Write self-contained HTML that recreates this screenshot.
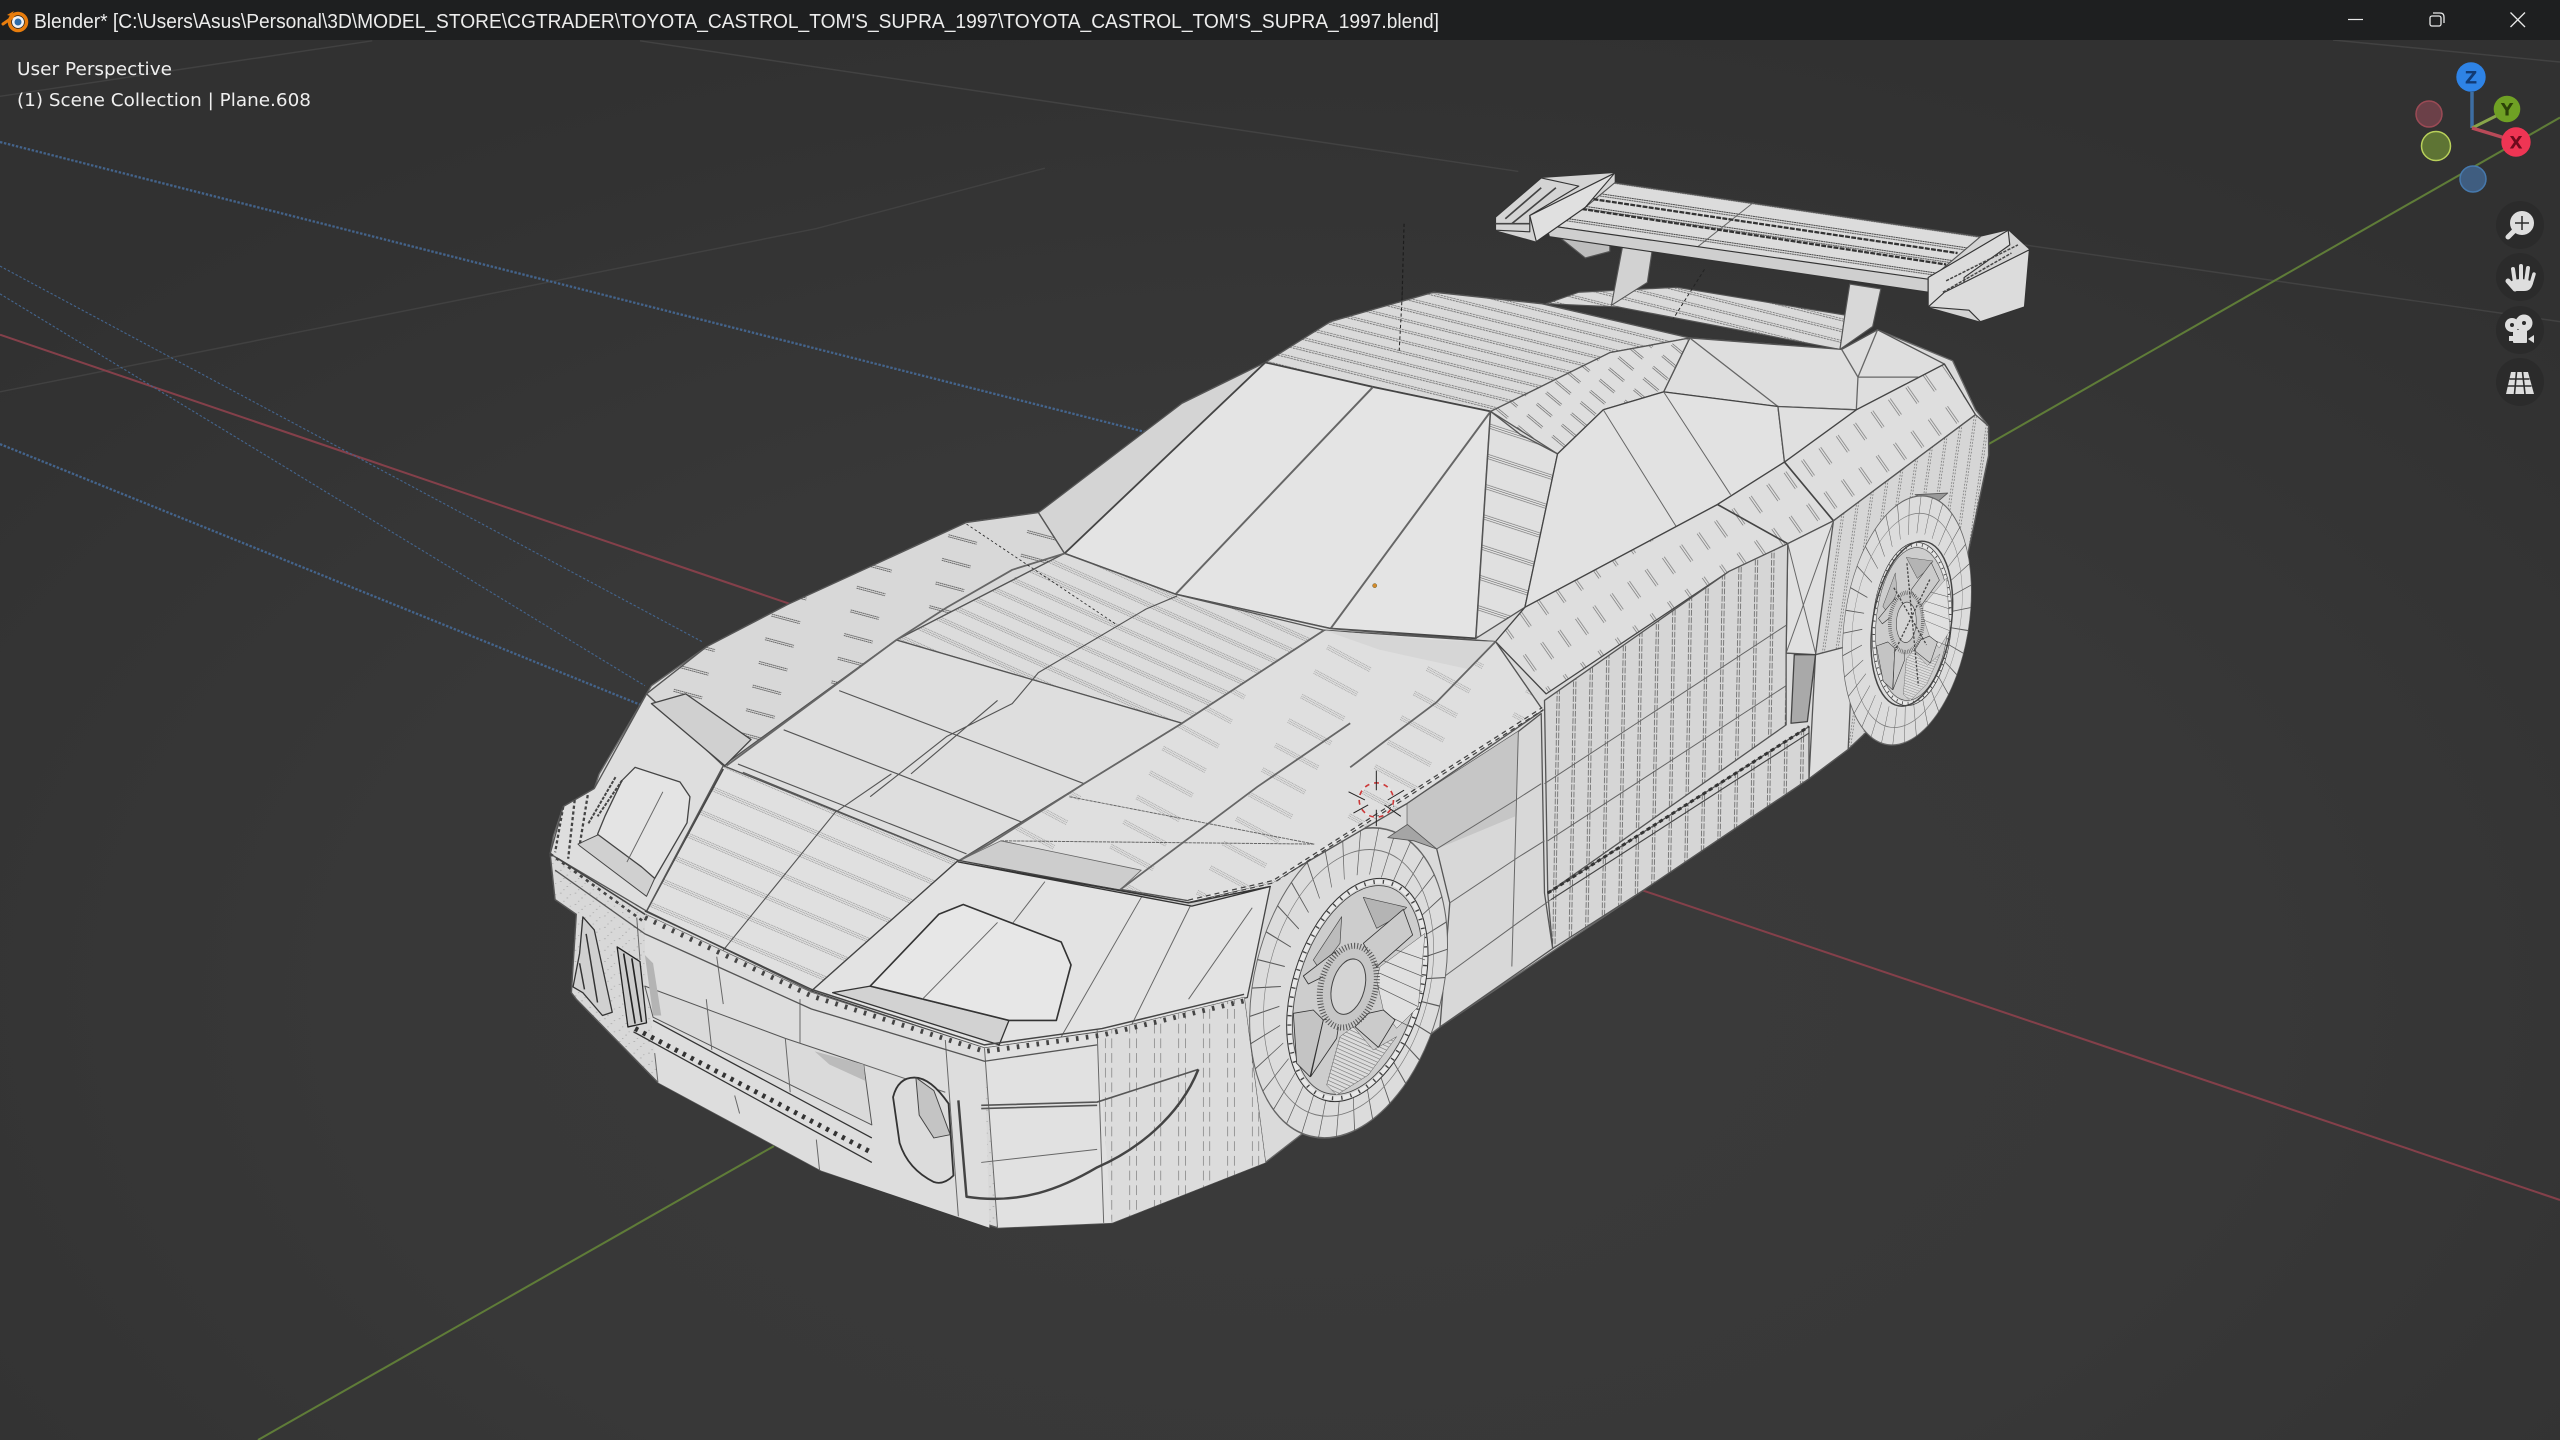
<!DOCTYPE html>
<html lang="en"><head><meta charset="utf-8"><title>Blender</title>
<style>
html,body{margin:0;padding:0;width:2560px;height:1440px;overflow:hidden;background:#363636}
svg{display:block;position:absolute;left:0;top:0}
#bg{position:absolute;left:0;top:0;width:2560px;height:1440px;background:radial-gradient(ellipse 1700px 1000px at 1300px 1000px,#3b3b3b 0%,#383838 55%,#313131 100%)}
</style></head><body><div id="bg"></div>
<svg width="2560" height="1440" viewBox="0 0 2560 1440" xmlns="http://www.w3.org/2000/svg">
<defs>
<pattern id="roof" width="20" height="6.500" patternUnits="userSpaceOnUse" patternTransform="rotate(14)"><rect width="20" height="6.500" fill="#dadada"/><path d="M0 1H20M0 2.200H20" stroke="#444" stroke-width=".42" stroke-dasharray=".8 .2 .5 .5"/></pattern>
<pattern id="hood" width="20" height="10" patternUnits="userSpaceOnUse" patternTransform="rotate(24)"><rect width="20" height="10" fill="#dcdcdc"/><path d="M0 1H20M0 2.200H20M0 3.400H20" stroke="#444" stroke-width=".32" stroke-dasharray=".5 .5"/></pattern>
<pattern id="nose" width="20" height="16" patternUnits="userSpaceOnUse" patternTransform="rotate(23)"><rect width="20" height="16" fill="#e0e0e0"/><path d="M0 1H20M0 2.200H20M0 3.400H20" stroke="#444" stroke-width=".3" stroke-dasharray=".5 .5"/></pattern>
<pattern id="fendL" width="46" height="15" patternUnits="userSpaceOnUse" patternTransform="rotate(15)"><rect width="46" height="15" fill="#d8d8d8"/><path d="M2 1H20M2 2.200H20" stroke="#444" stroke-width=".45" stroke-dasharray="1 .25"/></pattern>
<pattern id="fendR" width="60" height="17" patternUnits="userSpaceOnUse" patternTransform="rotate(28)"><rect width="60" height="17" fill="#dfdfdf"/><path d="M4 1H34M4 2.200H34M4 3.400H34" stroke="#555" stroke-width=".28" stroke-dasharray=".5 .5"/></pattern>
<pattern id="band" width="13" height="24" patternUnits="userSpaceOnUse" patternTransform="rotate(-35)"><rect width="13" height="24" fill="#dedede"/><path d="M1 0V24M2.400 0V24" stroke="#555" stroke-width=".32" stroke-dasharray="12 12"/></pattern>
<pattern id="cpil" width="9" height="20" patternUnits="userSpaceOnUse" patternTransform="rotate(-50)"><rect width="9" height="20" fill="#dedede"/><path d="M1 0V20M2.200 0V20" stroke="#555" stroke-width=".35" stroke-dasharray="12 8"/></pattern>
<pattern id="strip" width="30" height="18" patternUnits="userSpaceOnUse" patternTransform="rotate(18)"><rect width="30" height="18" fill="#e0e0e0"/><path d="M0 1H30M0 2.300H30M0 3.600H30" stroke="#555" stroke-width=".32"/></pattern>
<pattern id="vert" width="10" height="9" patternUnits="userSpaceOnUse" patternTransform="rotate(1)"><rect width="10" height="9" fill="#d6d6d6"/><path d="M1 0V9M2.400 0V9" stroke="#444" stroke-width=".38" stroke-dasharray="3.500 1"/></pattern>
<pattern id="vert2" width="15" height="9" patternUnits="userSpaceOnUse"><rect width="15" height="9" fill="#dcdcdc"/><path d="M2 0V9M6 0V9" stroke="#666" stroke-width=".35" stroke-dasharray="3 3"/></pattern>
<pattern id="rear" width="8" height="8" patternUnits="userSpaceOnUse" patternTransform="rotate(8)"><rect width="8" height="8" fill="#d6d6d6"/><path d="M1 0V8M2.200 0V8" stroke="#555" stroke-width=".35" stroke-dasharray="1 1"/></pattern>
<pattern id="wing" width="30" height="9" patternUnits="userSpaceOnUse" patternTransform="rotate(8.4)"><rect width="30" height="9" fill="#dcdcdc"/><path d="M0 1.200H30M0 2.600H30" stroke="#444" stroke-width=".55" stroke-dasharray="1.200 .3"/></pattern>
<pattern id="speck" width="9" height="7" patternUnits="userSpaceOnUse"><rect width="9" height="7" fill="#d8d8d8"/><path d="M1 1h1M5 4h1M3 6h.8M7 2h.7" stroke="#999" stroke-width=".4"/></pattern>
<pattern id="barrel" width="40" height="11" patternUnits="userSpaceOnUse" patternTransform="rotate(24)"><rect width="40" height="11" fill="#dcdcdc"/><path d="M0 1H40" stroke="#555" stroke-width="1.400"/></pattern>

<g id="tyre">
  <circle r="1" fill="#dcdcdc" stroke="#666" stroke-width=".01"/>
  <circle r=".85" fill="none" stroke="#5a5a5a" stroke-width=".3" stroke-dasharray=".007 .15"/>
  <circle r=".86" fill="none" stroke="#777" stroke-width=".006"/>
</g>
<!-- rim traced in 3x crop space; centre 352,510 -->
<g id="rim">
  <ellipse cx="352" cy="510" rx="195" ry="345" transform="rotate(17 352 510)" fill="#d2d2d2" stroke="#333" stroke-width="3"/>
  <ellipse cx="352" cy="510" rx="187" ry="335" transform="rotate(17 352 510)" fill="none" stroke="#e8e8e8" stroke-width="12"/>
  <ellipse cx="352" cy="510" rx="187" ry="335" transform="rotate(17 352 510)" fill="none" stroke="#444" stroke-width="12" stroke-dasharray="4 24"/>
  <ellipse cx="352" cy="510" rx="178" ry="323" transform="rotate(17 352 510)" fill="#cdcdcd" stroke="#444" stroke-width="2.500"/>
  <path d="M410 480L420 440L555 340L535 560L470 625L430 570Z" fill="#e0e0e0" stroke="#555" stroke-width="1.500"/>
  <path d="M420 460L545 515M412 500L535 560M425 420L550 470M450 590L510 620M440 380L555 420" stroke="#555" stroke-width="2" fill="none"/>
  <path d="M260 795L300 650L340 620L400 690L470 650L385 765L290 825Z" fill="url(#barrel)" stroke="#555" stroke-width="1.500"/>
  <path d="M160 580L220 570L250 600L210 770L170 730Z" fill="#c4c4c4" stroke="#333" stroke-width="2.500"/>
  <path d="M370 232L500 262L470 292L410 325Z" fill="#b4b4b4" stroke="#444" stroke-width="2"/>
  <path d="M220 420L305 290L300 370L240 450Z" fill="#bcbcbc" stroke="#444" stroke-width="2"/>
  <g fill="#cbcbcb" stroke="#333" stroke-width="2.500">
    <path d="M370 370L490 268L518 345L410 440Z"/>
    <path d="M190 468L285 395L310 440L205 492Z"/>
    <path d="M345 620L415 682L465 600L430 570L385 580Z"/>
    <path d="M250 600L300 590L290 655L212 770Z"/>
  </g>
  <ellipse cx="325" cy="500" rx="82" ry="125" transform="rotate(15 325 500)" fill="#c6c6c6" stroke="#555" stroke-width="18" stroke-dasharray="3 6"/>
  <ellipse cx="325" cy="500" rx="49" ry="85" transform="rotate(15 325 500)" fill="#d4d4d4" stroke="#444" stroke-width="3"/>
</g>
</defs>

<!-- world lines -->
<g transform="scale(1.63265)" fill="none">
  <path d="M0 59L228 25M0 240L500 140L640 103" stroke="#414141" stroke-width=".9"/>
  <path d="M392 25L930 105M1240 150L1568 197M1429 24.500L1568 38" stroke="#424242" stroke-width=".9"/>
  <path d="M0 205L490 372M1005 545L1568 735" stroke="#84404a" stroke-width="1.250"/>
  <path d="M158 882L474 702M1218 272L1568 72" stroke="#5f7c38" stroke-width="1.250"/>
  <path d="M0 87L703 265M0 272L393 432" stroke="#44648c" stroke-width="1.400" stroke-dasharray="1.500 1"/>
  <path d="M0 163L430 393M0 180L395 420" stroke="#44648c" stroke-width=".7" stroke-dasharray="1.500 1.200"/>
  <path d="M860 137L858 210" stroke="#1c1c1c" stroke-width=".7" stroke-dasharray="2 1.500"/>
</g>

<!-- car -->
<g transform="scale(1.63265)" stroke-linejoin="round">
  <!-- wing struts, deck -->
  <g stroke="#555" stroke-width=".7">
    <polygon points="947,186 967,179 1027,176 1130,193 1127,214 991,188" fill="url(#roof)"/>
    <polygon points="994,150 1012,153 1009,173 987,187" fill="#d2d2d2"/>
    <polygon points="1133,174 1152,177 1147,200 1127,214 1130,193" fill="#d8d8d8"/>
    <!-- wing -->
    <polygon points="951,142 971,158 986,154 986,145" fill="#bdbdbd"/>
    <polygon points="1181,172 1213,145 1230,141 1243,153 1240,188 1213,197 1181,188" fill="#d4d4d4" stroke="none"/>
    <polygon points="916,133 944,109 989,106 989,112 971,127 941,148 916,141" fill="#d4d4d4" stroke="none"/>
    <polygon points="916,133 944,109 967,114 937,132 937,142 916,141" fill="#d4d4d4" stroke="#333"/>
    <path d="M922,134L944,115M926,137L953,115M916,137L937,137" fill="none" stroke="#444" stroke-width="1"/>
    <polygon points="989,112 1213,145 1181,172 947,138 971,127" fill="url(#wing)"/>
    <path d="M1074,124L1035,155" fill="none" stroke="#666" stroke-width=".6"/>
    <path d="M976,122L1199,155M969,128L1192,162" fill="none" stroke="#333" stroke-width="1.400" stroke-dasharray="3 .8"/>
    <polygon points="947,138 1181,171 1181,179 949,145" fill="#cfcfcf" stroke="#333"/>
    <polygon points="989,106 971,127 941,148 937,132" fill="#e0e0e0" stroke="#333"/>
    <polygon points="1181,170 1230,141 1231,150 1203,170 1203,185 1181,188" fill="#dcdcdc" stroke="#333"/>
    <polygon points="1191,179 1243,153 1240,188 1213,197 1206,190 1181,188" fill="#dcdcdc" stroke="#333"/>
    <path d="M1190,179L1232,155M1192,172L1236,150" fill="none" stroke="#444" stroke-width=".9" stroke-dasharray="2 .8"/>
  </g>
  <!-- body silhouette -->
  <polygon points="337,523 339,512 345,494 364,483 367,474 396,425 399,420 433,396 483,370 592,320 636,314 680,282 724,247 775,222 815,197 878,179 944,186 1035,207 1128,214 1150,202 1196,221 1210,251 1218,261 1218,279 1206,336 1132,459 1108,477 1007,545 882,629 775,712 681,749 611,752 503,717 403,663 353,612 350,608 353,560 340,551" fill="#dadada" stroke="#666" stroke-width=".8"/>
  <g stroke="#555" stroke-width=".8">
    <!-- trunk -->
    <polygon points="1035,207 1128,214 1150,202 1191,223 1137,251 1089,249 1019,240" fill="#dedede"/>
    <path d="M1128,214L1138,231L1137,251M1138,231L1175,231M1150,202L1138,231M1035,207L1089,249" fill="none" stroke="#666"/>
    <!-- roof -->
    <polygon points="775,222 815,197 878,179 944,186 1035,207 986,216 913,252 841,237" fill="url(#roof)"/>
    <!-- a-strip left -->
    <polygon points="724,247 775,222 652,339 636,314" fill="#d4d4d4" stroke="#555"/>
    <!-- windshield -->
    <polygon points="775,222 841,237 913,252 904,391 815,385 720,364 652,339" fill="#e4e4e4" stroke="#444" stroke-width="1.100"/>
    <path d="M841,237L720,364M913,252L815,385" stroke="#666" stroke-width="1.200" fill="none"/>
    <!-- c pillar -->
    <polygon points="913,252 986,216 1035,207 1019,240 982,251 954,278" fill="url(#cpil)"/>
    <polygon points="913,252 931,266 954,278 934,372 904,391" fill="url(#strip)"/>
    <!-- side glass -->
    <polygon points="954,278 982,251 1019,240 1089,249 1093,283 1052,309 934,372" fill="#e2e2e2" stroke="#444"/>
    <path d="M982,251L1027,323M1019,240L1060,303" fill="none" stroke="#666" stroke-width=".6"/>
    <polygon points="1089,249 1137,251 1123,280 1093,283" fill="#e0e0e0"/>
    <!-- shoulder band -->
    <polygon points="1191,223 1137,251 1093,283 1052,309 934,372 916,393 947,425 1059,350 1095,333 1123,319 1210,254" fill="url(#band)" stroke="#444"/>
    <path d="M1052,309L1095,333M1093,283L1123,319" fill="none" stroke="#444" stroke-width="1"/>
    <!-- rear quarter -->
    <polygon points="1123,319 1210,254 1218,261 1218,279 1206,336 1197,397 1132,459 1112,401 1094,400 1095,333" fill="url(#rear)"/>
    <polygon points="1095,333 1123,319 1112,401 1094,400" fill="#e0e0e0"/>
    <path d="M1095,333L1112,400M1123,319L1094,400" fill="none" stroke="#666" stroke-width=".6"/>
    <polygon points="1112,401 1135,395 1132,459 1108,477" fill="#dedede"/>
    <!-- door -->
    <polygon points="946,429 1059,350 1095,333 1094,400 1094,444 948,547" fill="url(#vert)" stroke="#555"/>
    <polygon points="948,547 1108,445 1108,477 1007,545 951,581" fill="url(#vert)"/>
    <polygon points="1099,401 1112,401 1107,442 1097,443" fill="#a9a9a9" stroke="#444"/>
    <path d="M948,547L1108,445" fill="none" stroke="#333" stroke-width="1.800" stroke-dasharray="2.500 2"/>
    <path d="M950,551L1108,449" fill="none" stroke="#444" stroke-width=".7"/>
    <path d="M946,480L1094,383M948,515L1094,420" fill="none" stroke="#666" stroke-width=".6"/>
    <!-- front fender -->
    <polygon points="862,492 930,448 944,437 946,547 951,581 882,629 888,553 880,520 862,505" fill="#d8d8d8" stroke="#555"/>
    <polygon points="862,492 930,448 928,500 880,520 862,505" fill="#c6c6c6" stroke="none"/>
    <path d="M930,448L926,592M880,520L930,489L944,480M888,553L930,525L946,515M882,600L930,565L950,551" fill="none" stroke="#666" stroke-width=".6"/>
  </g>
  <!-- rear wheel -->
  <polygon points="1173,303 1193,302 1186,308" fill="#999" stroke="#555" stroke-width=".5"/>
  <g transform="translate(1168,380) rotate(9) scale(38,77)"><use href="#tyre"/></g>
  <g transform="scale(.6125) translate(1912,624) rotate(-8) scale(.2,.24) translate(-352,-510)"><use href="#rim"/></g>
  <ellipse cx="1171" cy="382" rx="24" ry="51" transform="rotate(9 1171 382)" fill="none" stroke="#444" stroke-width=".9"/>
  <path d="M1160,360L1180,395M1182,355L1160,400M1168,345L1175,420" fill="none" stroke="#444" stroke-width=".8" stroke-dasharray="1.500 1"/>
  <!-- front wheel -->
  <g transform="translate(826,602) rotate(14) scale(57.600,96.800)"><use href="#tyre"/></g>
  <polygon points="850,513 862,505 880,520 866,515" fill="#a5a5a5" stroke="#555" stroke-width=".5"/>
  <g transform="scale(.6125) translate(1240,820) scale(.33333)"><use href="#rim"/></g>

  <!-- hood -->
  <g stroke="#555" stroke-width=".8">
    <polygon points="396,425 433,396 483,370 592,320 636,314 652,339 720,364 815,385 916,393 945,435 862,492 780,540 730,552 587,527 443,469" fill="#e0e0e0"/>
    <polygon points="396,425 433,396 483,370 592,320 636,314 652,339 549,392 443,469" fill="url(#fendL)" stroke="#555"/>
    <polygon points="652,339 720,364 811,386 724,443 549,392" fill="url(#hood)" stroke="#555"/>
    <polygon points="549,392 724,443 586,528 443,469" fill="#dedede"/>
    <polygon points="811,386 916,393 945,435 862,492 780,540 730,552 586,528 724,443" fill="url(#fendR)" stroke="#555"/>
    <polygon points="586,528 686,545 699,533 613,515" fill="#cdcdcd" stroke="#666" stroke-width=".5"/>
    <polygon points="811,386 880,392 916,393 900,410 845,398" fill="#d6d6d6" stroke="none"/>
    <path d="M613,515L805,517M655,488L805,517" fill="none" stroke="#666" stroke-width=".6" stroke-dasharray="2 .5"/>
    <path d="M514,423L664,480M480,447L627,504M452,468L592,523M611,429L558,474M546,474L511,498M636,412L620,431L580,451L533,488M721,365L702,373L636,412" fill="none" stroke="#555" stroke-width=".7"/>
    <path d="M811,386L724,443L664,480L606,517L586,528M827,443L770,482L686,545M652,339L620,349L580,372L549,392L445,469M916,393L880,430L827,470" fill="none" stroke="#666" stroke-width="1.100"/>
    <path d="M592,321L683,382" fill="none" stroke="#222" stroke-width=".5" stroke-dasharray="1.500 1.500"/>
    <!-- nose -->
    <polygon points="443,469 587,527 497,607 396,558" fill="url(#nose)"/>
    <path d="M512,497L443,582M455,473L587,527" fill="none" stroke="#555" stroke-width=".7"/>
    <path d="M443,471L396,558" stroke="#444" stroke-width="1" fill="none"/>
    <!-- left headlight block -->
    <polygon points="396,425 443,469 396,558 337,523 345,494 364,483" fill="#dedede"/>
    <polygon points="399,431 444,469 460,453 420,425" fill="#d0d0d0" stroke="#444"/>
    <polygon points="354,517 367,511 393,531 401,538 396,549 355,518" fill="#d0d0d0" stroke="#444" stroke-width=".6"/>
    <polygon points="389,470 416.500,479 422.600,488 420.800,504 401,538 393,531 366,511 370.500,500 381,478" fill="#e4e4e4" stroke="#444"/>
    <path d="M406,485L384,528" fill="none" stroke="#666" stroke-width=".6"/>
    <path d="M381,478L366,500M377,476L360,505" fill="none" stroke="#444" stroke-width="1.200" stroke-dasharray="2 .8"/>
    <path d="M345,494L340,522M352,490L348,526M360,487L355,518" fill="none" stroke="#444" stroke-width="1.400" stroke-dasharray="2 1.500"/>
    <!-- right nose -->
    <polygon points="587,527 728,553 778,543 764,611 681,631 603,642 497,607" fill="#e3e3e3" stroke="#444"/>
    <path d="M640,540L578,620M700,548L650,635M730,553L692,630M767,556L728,612" fill="none" stroke="#666" stroke-width=".6"/>
    <polygon points="533,604 618,625 612,640 510,608" fill="#d2d2d2" stroke="#333"/>
    <polygon points="575,560 590,554 650,577 656,591 647,625 618,625 533,604" fill="#e7e7e7" stroke="#333" stroke-width="1"/>
    <path d="M611,565L565,612" fill="none" stroke="#666" stroke-width=".6"/>
    <!-- seam -->
    <polygon points="587,528 728,553 778,543 730,555" fill="#cbcbcb" stroke="#333"/>
    <path d="M728,552L780,540L945,434" fill="none" stroke="#444" stroke-width="2.200" stroke-dasharray="3 2.500"/>
    <path d="M728,552L780,540L945,434" fill="none" stroke="#efefef" stroke-width=".6"/>
    <!-- bumper -->
    <polygon points="337,523 395,560 497,608 603,642 675,632 762,611 775,712 681,749 611,752 503,717 403,663 353,612 350,608 353,560 340,551" fill="url(#speck)"/>
    <polygon points="603,642 675,632 762,611 775,712 681,749 611,752" fill="#e1e1e1" stroke="none"/>
    <polygon points="672,633 762,611 775,712 681,749" fill="url(#vert2)" stroke="none"/>
    <polygon points="497,608 603,642 606,752 503,717 403,663 395,590 395,560" fill="#dddddd" stroke="none"/>
    <polygon points="395,604 481,636 529,652 534,689 400,623" fill="#dadada" stroke="#555" stroke-width=".6"/>
    <polygon points="395,585 400,622 405,622 400,590" fill="#b4b4b4" stroke="none"/>
    <polygon points="499,644 529,652 530,662 508,652" fill="#bbbbbb" stroke="none"/>
    <path d="M603,642L611,752M672,631L676,749M579,637L587,745M439,586L443,615M432.600,612L436,643M481,636L484,669M490,612L490,639M450,671L453,682M500,698L502,717M390,562L392,588M401,645L403,663M529,652L579,669" fill="none" stroke="#666" stroke-width=".6"/>
    <path d="M395,562L497,610L603,644L675,634L762,613" fill="none" stroke="#444" stroke-width="3" stroke-dasharray="1.600 4.500"/>
    <path d="M395,558L497,606L603,640L675,630L762,609M342,526L395,560" fill="none" stroke="#444" stroke-width=".9"/>
    <path d="M337,523L395,565" fill="none" stroke="#444" stroke-width="1.600" stroke-dasharray="2 2.500"/>
    <path d="M340,533L395,572L497,618L603,650L672,640" fill="none" stroke="#555" stroke-width=".8"/>
    <path d="M601,677L672,675L734,655M601,679L672,677" fill="none" stroke="#555" stroke-width="1"/>
    <path d="M734,655C722,685 695,705 672,715C650,728 625,738 592,733L587,674" fill="none" stroke="#444" stroke-width="1.500"/>
    <path d="M601,712L672,704" fill="none" stroke="#666" stroke-width=".6"/>
    <path d="M547,672Q550,660 560,660Q570,660 581,676L584,720Q578,726 572,724Q556,716 551,700Z" fill="#dcdcdc" stroke="#333" stroke-width="1.100"/>
    <polygon points="561,660 572,668 582,695 572,697 563,683" fill="#c4c4c4" stroke="#444" stroke-width=".6"/>
    <path d="M389,630L534,706" fill="none" stroke="#333" stroke-width="3" stroke-dasharray="2 3.500"/>
    <path d="M400,625L534,697M388,632L534,712" fill="none" stroke="#333" stroke-width=".8"/>
    <polygon points="357,561.600 364,569.600 375,620 369,622 357,608 351,604.500 355,584" fill="#d0d0d0" stroke="#333" stroke-width=".8"/>
    <path d="M359,572L366,614M355,590L358,606" fill="none" stroke="#333" stroke-width=".9"/>
    <polygon points="378,580 392,589 396,626.500 384.600,629" fill="#cccccc" stroke="#222" stroke-width=".8"/>
    <path d="M382,584L389,627M387,587L393,626" fill="none" stroke="#222" stroke-width="1"/>
  </g>
  <!-- overlay dashed black lines -->
  <path d="M859,178L857,215M1044,165L1025,195" fill="none" stroke="#222" stroke-width=".6" stroke-dasharray="2 1.500"/>
  <!-- origin -->
  <circle cx="842" cy="358.700" r="1.300" fill="#d48a2a" stroke="#664" stroke-width=".3"/>
  <!-- 3D cursor -->
  <circle cx="843" cy="490" r="10.500" fill="none" stroke="#e8e8e8" stroke-width="1"/>
  <circle cx="843" cy="490" r="10.500" fill="none" stroke="#cc3a3a" stroke-width="1" stroke-dasharray="3 3"/>
  <path d="M843,472V484M843,496V506M826,485L836,490M850,490L860,484M829,498L838,493M848,493L858,500" stroke="#222" stroke-width=".6" fill="none"/>
</g>

<!-- overlay text -->
<text x="17" y="75" font-family="'DejaVu Sans',sans-serif" font-size="18" fill="#efefef" textLength="155" lengthAdjust="spacingAndGlyphs">User Perspective</text>
<text x="17" y="106" font-family="'DejaVu Sans',sans-serif" font-size="18" fill="#efefef" textLength="294" lengthAdjust="spacingAndGlyphs">(1) Scene Collection | Plane.608</text>

<!-- gizmo -->
<g>
  <path d="M2472 128V92" stroke="#3d6ea3" stroke-width="3.500"/>
  <path d="M2472 128L2500 114" stroke="#88a54a" stroke-width="3"/>
  <path d="M2472 128L2505 138" stroke="#b84a58" stroke-width="3.500"/>
  <circle cx="2429" cy="114" r="13" fill="#6b4048" stroke="#9b4a55" stroke-width="1.500"/>
  <circle cx="2436" cy="146" r="14.500" fill="#5e7434" stroke="#b8d05a" stroke-width="1.500"/>
  <circle cx="2473" cy="179" r="13" fill="#3f5d80" stroke="#4679ad" stroke-width="1.500"/>
  <circle cx="2471" cy="77" r="14.700" fill="#2e83e6"/>
  <circle cx="2507" cy="109" r="13.300" fill="#6fa024"/>
  <circle cx="2516" cy="142" r="14.700" fill="#ee3554"/>
  <g font-family="'DejaVu Sans',sans-serif" font-weight="700" font-size="17" text-anchor="middle">
    <text x="2471" y="83.500" fill="#113a74">Z</text>
    <text x="2507" y="115.500" fill="#2c4208">Y</text>
    <text x="2516" y="148.500" fill="#6e0a1d">X</text>
  </g>
  <circle cx="2520" cy="225" r="24" fill="#2b2b2b"/>
  <circle cx="2520" cy="277" r="24" fill="#2b2b2b"/>
  <circle cx="2520" cy="330" r="24" fill="#2b2b2b"/>
  <circle cx="2520" cy="382" r="24" fill="#2b2b2b"/>
  <!-- zoom -->
  <circle cx="2522" cy="223" r="12" fill="#dedede"/>
  <path d="M2522 216V230M2515 223H2529" stroke="#2b2b2b" stroke-width="1.500"/>
  <path d="M2514 231L2508 237" stroke="#dedede" stroke-width="5" stroke-linecap="round"/>
  <!-- hand -->
  <g stroke="#dedede" stroke-linecap="round" fill="none">
    <path d="M2513 269L2515 283M2521 266V282M2528 268L2526 282" stroke-width="4"/>
    <path d="M2534 274L2531 284" stroke-width="3.500"/>
    <path d="M2508 281L2515 289" stroke-width="5"/>
  </g>
  <path d="M2510 282Q2520 276 2533 282Q2532 291 2524 291H2516Q2511 287 2510 282Z" fill="#dedede"/>
  <!-- camera -->
  <circle cx="2512" cy="325" r="7" fill="#dedede"/>
  <circle cx="2524" cy="323" r="8.500" fill="#dedede"/>
  <circle cx="2512" cy="325" r="2" fill="#2b2b2b"/>
  <circle cx="2524" cy="323" r="2" fill="#2b2b2b"/>
  <rect x="2513" y="330" width="14" height="13" rx="1" fill="#dedede"/>
  <rect x="2509" y="336" width="4" height="5" fill="#dedede"/>
  <polygon points="2528,339 2534,335 2534,343" fill="#dedede"/>
  <!-- grid -->
  <polygon points="2511,372 2528,372 2534,394 2506,394" fill="#dedede"/>
  <path d="M2509.500 379H2529.500M2507.500 386H2531.500M2516.500 372L2514.500 394M2522.500 372L2525 394" stroke="#2b2b2b" stroke-width="1.600"/>
</g>

<!-- title bar -->
<rect x="0" y="0" width="2560" height="40" fill="#1e1f20"/>
<text x="34" y="28" font-family="'Liberation Sans',sans-serif" font-size="20" fill="#ececec" textLength="1405" lengthAdjust="spacingAndGlyphs">Blender* [C:\Users\Asus\Personal\3D\MODEL_STORE\CGTRADER\TOYOTA_CASTROL_TOM'S_SUPRA_1997\TOYOTA_CASTROL_TOM'S_SUPRA_1997.blend]</text>
<g>
  <path d="M7 15 L14 11 L11 16Z" fill="#e87d0d"/>
  <path d="M3 24 L13 17" stroke="#e87d0d" stroke-width="3" stroke-linecap="round"/>
  <circle cx="18" cy="22" r="8.500" fill="none" stroke="#e87d0d" stroke-width="3.500"/>
  <circle cx="18" cy="22" r="6" fill="#f2f2f2"/>
  <circle cx="18" cy="22" r="3.500" fill="#2f6ca8"/>
</g>
<path d="M2348 19.500H2363" stroke="#e8e8e8" stroke-width="1.200"/>
<g fill="none" stroke="#e8e8e8" stroke-width="1.300">
  <rect x="2430" y="16" width="11" height="10" rx="2"/>
  <path d="M2433 13H2440Q2444 13 2444 17V23"/>
  <path d="M2510.500 12.500L2525 27M2525 12.500L2510.500 27"/>
</g>
</svg>
</body></html>
